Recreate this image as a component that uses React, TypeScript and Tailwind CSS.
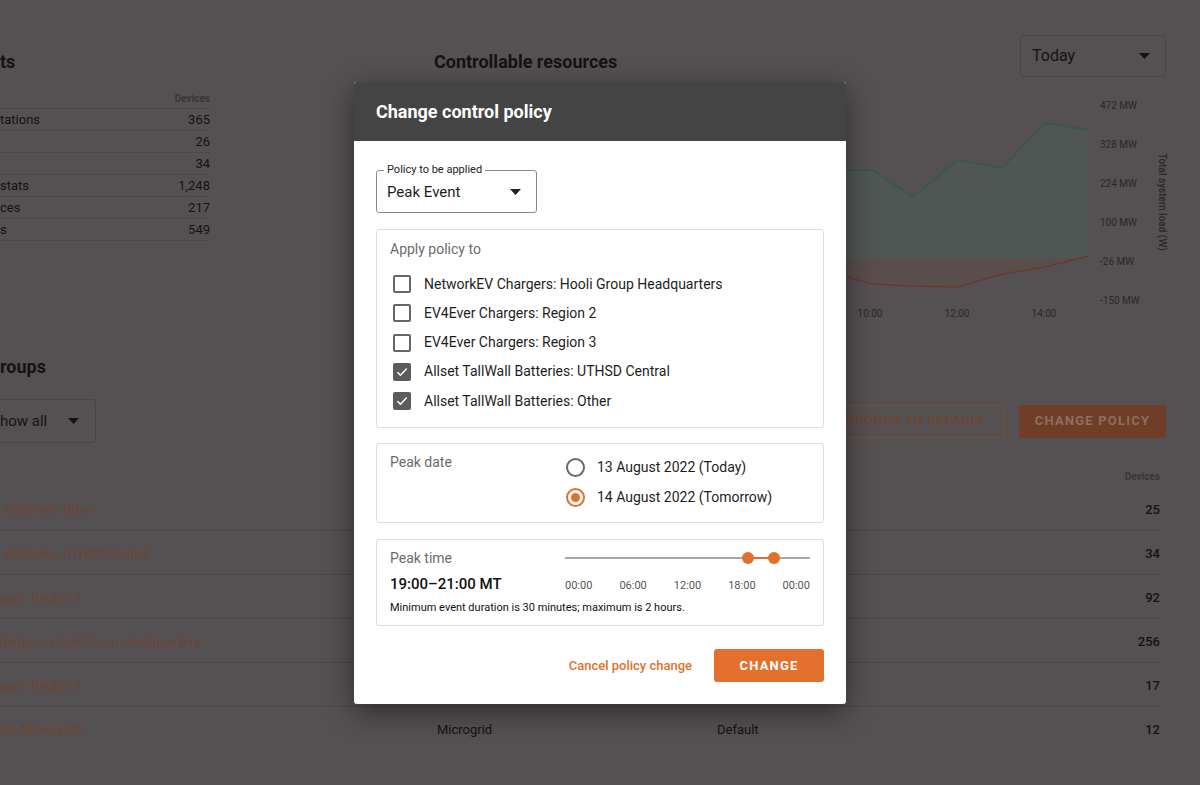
import React from "react";

const FONT = { fontFamily: "Roboto, 'Liberation Sans', Arial, sans-serif" };

function Caret({ color = "currentColor" }: { color?: string }) {
  return (
    <svg width="11" height="6" viewBox="0 0 11 6">
      <path d="M0 0h11L5.5 6z" fill={color} />
    </svg>
  );
}

function Checkbox({ checked }: { checked: boolean }) {
  if (checked)
    return (
      <span className="flex h-[18px] w-[18px] shrink-0 items-center justify-center rounded-[2px] bg-[#5c5c5c]">
        <svg width="12" height="10" viewBox="0 0 12 10">
          <path d="M1.4 5.2l3.1 3 6.2-6.6" fill="none" stroke="white" strokeWidth="1.5" />
        </svg>
      </span>
    );
  return <span className="block h-[18px] w-[18px] shrink-0 rounded-[2px] border-2 border-[#666666]" />;
}

function Radio({ checked }: { checked: boolean }) {
  if (checked)
    return (
      <span className="flex h-[19px] w-[19px] shrink-0 items-center justify-center rounded-full border-2 border-[#e2702d]">
        <span className="block h-[9px] w-[9px] rounded-full bg-[#e2702d]" />
      </span>
    );
  return <span className="block h-[19px] w-[19px] shrink-0 rounded-full border-2 border-[#6a6a6a]" />;
}

const topRows = [
  { name: "tations", n: "365" },
  { name: "", n: "26" },
  { name: "", n: "34" },
  { name: "stats", n: "1,248" },
  { name: "ces", n: "217" },
  { name: "s", n: "549" },
];

const lowerRows = [
  { name: "Batteries: Other", pl: "pl-[5px]", type: "Battery", policy: "Peak Event", n: "25" },
  { name: "Batteries: UTHSD Central", pl: "pl-[5px]", type: "Battery", policy: "Peak Event", n: "34" },
  { name: "gers: Region 2", pl: "pl-0", type: "EV charger", policy: "Default", n: "92" },
  { name: "hargers: Hooli Group Headquarters", pl: "pl-0", type: "EV charger", policy: "Default", n: "256" },
  { name: "gers: Region 3", pl: "pl-0", type: "EV charger", policy: "Default", n: "17" },
  { name: "sta Microgrids", pl: "pl-0", type: "Microgrid", policy: "Default", n: "12" },
];

const checks = [
  { label: "NetworkEV Chargers: Hooli Group Headquarters", checked: false },
  { label: "EV4Ever Chargers: Region 2", checked: false },
  { label: "EV4Ever Chargers: Region 3", checked: false },
  { label: "Allset TallWall Batteries: UTHSD Central", checked: true },
  { label: "Allset TallWall Batteries: Other", checked: true },
];

function Chart() {
  const green: [number, number][] = [
    [300, 120], [420, 110], [520, 95], [600, 92], [637, 85], [662, 85], [703, 112], [748, 75], [792, 83], [835, 38], [878, 45],
  ];
  const red: [number, number][] = [
    [300, 185], [420, 188], [520, 190], [600, 189], [637, 192], [662, 199], [703, 201], [748, 202], [792, 189], [835, 182], [878, 171],
  ];
  const zero = 173;
  const line = (pts: [number, number][]) => pts.map((p) => p.join(",")).join(" ");
  const area = (pts: [number, number][]) =>
    `${pts[0][0]},${zero} ${line(pts)} ${pts[pts.length - 1][0]},${zero}`;
  const yl = [
    ["472 MW", 20],
    ["328 MW", 59],
    ["224 MW", 98],
    ["100 MW", 137],
    ["-26 MW", 176],
    ["-150 MW", 215],
  ] as const;
  const xl = [
    ["10:00", 660],
    ["12:00", 747],
    ["14:00", 834],
  ] as const;
  return (
    <svg width="990" height="240" viewBox="0 0 990 240" className="mt-[8px] block" style={FONT}>
      <polygon points={area(green)} fill="#505653" />
      <polygon points={area(red)} fill="#5a4e4d" />
      <polyline points={line(green)} fill="none" stroke="#315a4c" strokeWidth="1.4" />
      <polyline points={line(red)} fill="none" stroke="#6a3a30" strokeWidth="1.4" />
      {yl.map(([t, y]) => (
        <text key={t} x="890" y={y + 3.5} fontSize="10" fill="#2b2728">
          {t}
        </text>
      ))}
      {xl.map(([t, x]) => (
        <text key={t} x={x} y="232" fontSize="10" fill="#2b2728" textAnchor="middle">
          {t}
        </text>
      ))}
      <text
        x="0"
        y="0"
        fontSize="10"
        fontWeight="500"
        fill="#2b2728"
        textAnchor="middle"
        transform="translate(949 117) rotate(90)"
      >
        Total system load (W)
      </text>
    </svg>
  );
}

export default function App() {
  return (
    <div className="relative h-[785px] w-[1200px] overflow-hidden bg-[#555052] text-[#151213]" style={FONT}>
      {/* Top section */}
      <div className="flex h-[330px]">
        <div className="w-[210px] shrink-0 pt-[50px]">
          <div className="h-[24px] text-[18px] font-bold leading-[24px]">ts</div>
          <div className="mt-[14px] flex h-[21px] items-center justify-end border-b border-[#4a4647] text-[10px] font-bold text-[#3a3637]">
            Devices
          </div>
          {topRows.map((r, i) => (
            <div
              key={i}
              className="flex h-[22px] items-center justify-between border-b border-[#4c4849] pt-[1px] text-[13px]"
            >
              <span>{r.name}</span>
              <span>{r.n}</span>
            </div>
          ))}
        </div>
        <div className="flex flex-1 flex-col">
          <div className="flex items-start justify-between pl-[224px] pr-[34px] pt-[35px]">
            <div className="mt-[15px] text-[18px] font-bold leading-[24px]">Controllable resources</div>
            <div className="flex h-[42px] w-[146px] items-center justify-between rounded-[4px] border border-[#4a4546] pl-[11px] pr-[15px] text-[16px]">
              <span>Today</span>
              <Caret color="#151213" />
            </div>
          </div>
          <Chart />
        </div>
      </div>

      {/* Lower section */}
      <div className="w-[1166px]">
        <div className="mt-[25px] h-[24px] text-[18px] font-bold leading-[24px]">roups</div>
        <div className="mt-[20px] flex h-[44px] items-center justify-between">
          <div className="flex h-[44px] w-[96px] items-center justify-between rounded-r-[4px] border border-l-0 border-[#4a4546] pr-[16px] text-[15px]">
            <span>how all</span>
            <Caret color="#151213" />
          </div>
          <div className="flex items-center gap-[14px]">
            <div className="flex h-[33px] items-center rounded-[3px] border border-[#76503b] px-[18px] text-[13px] font-bold tracking-[0.8px] text-[#6e4632]">
              RESET ALL GROUPS TO DEFAULT
            </div>
            <div className="flex h-[33px] w-[147px] items-center justify-center rounded-[3px] bg-[#703e26] text-[13px] font-bold tracking-[1.2px] text-[#8b6f60]">
              CHANGE POLICY
            </div>
          </div>
        </div>
        <div className="w-[1160px]">
          <div className="mt-[23px] flex h-[21px] items-center justify-end text-[10px] font-bold text-[#3a3637]">
            Devices
          </div>
          {lowerRows.map((r, i) => (
            <div
              key={i}
              className={`grid h-[44px] grid-cols-[437px_280px_1fr_80px] items-center pt-[2px] text-[13px] ${
                i < lowerRows.length - 1 ? "border-b border-[#4b4748]" : ""
              }`}
            >
              <span className={`${r.pl} text-[#6c4632]`}>{r.name}</span>
              <span>{r.type}</span>
              <span>{r.policy}</span>
              <span className="text-right font-medium">{r.n}</span>
            </div>
          ))}
        </div>
      </div>

      {/* Modal */}
      <div className="absolute left-[354px] top-[82px] w-[492px] overflow-hidden rounded-[3px] bg-white shadow-[0_8px_30px_rgba(0,0,0,0.45)]">
        <div className="flex h-[59px] items-center bg-[#444444] px-[22px]">
          <span className="text-[18px] font-bold text-white">Change control policy</span>
        </div>
        <div className="px-[22px] pb-[22px] pt-[29px]">
          {/* select */}
          <div className="relative flex h-[43px] w-[161px] items-center justify-between rounded-[3px] border border-[#8a8a8a] pl-[10px] pr-[15px] text-[15px] text-[#1e1e1e]">
            <span className="absolute -top-[8px] left-[7px] bg-white px-[3px] text-[11px] leading-[14px] text-[#222]">
              Policy to be applied
            </span>
            <span className="mt-[1px]">Peak Event</span>
            <Caret color="#222" />
          </div>

          {/* apply policy */}
          <div className="mt-[16px] rounded-[3px] border border-[#dddddd] pb-[12px] pl-[13px] pt-[9px]">
            <div className="h-[20px] text-[14px] leading-[20px] text-[#6b6b6b]">Apply policy to</div>
            <div className="mt-[10px] flex flex-col">
              {checks.map((c) => (
                <div key={c.label} className="flex h-[29.25px] items-center pt-[1px]">
                  <span className="ml-[3px]">
                    <Checkbox checked={c.checked} />
                  </span>
                  <span className="ml-[13px] text-[14px] text-[#1e1e1e]">{c.label}</span>
                </div>
              ))}
            </div>
          </div>

          {/* peak date */}
          <div className="mt-[15px] flex rounded-[3px] border border-[#dddddd] pb-[10px] pl-[13px] pt-[8px]">
            <div className="h-[20px] w-[176px] text-[14px] leading-[20px] text-[#6b6b6b]">Peak date</div>
            <div className="flex flex-col">
              <div className="flex h-[30px] items-center">
                <Radio checked={false} />
                <span className="ml-[12px] text-[14px] text-[#1e1e1e]">13 August 2022 (Today)</span>
              </div>
              <div className="flex h-[30px] items-center">
                <Radio checked={true} />
                <span className="ml-[12px] text-[14px] text-[#1e1e1e]">14 August 2022 (Tomorrow)</span>
              </div>
            </div>
          </div>

          {/* peak time */}
          <div className="mt-[16px] rounded-[3px] border border-[#dddddd] pb-[10px] pl-[13px] pr-[13px] pt-[8px]">
            <div className="flex">
              <div className="w-[175px]">
                <div className="h-[20px] text-[14px] leading-[20px] text-[#6b6b6b]">Peak time</div>
                <div className="mt-[6px] h-[20px] text-[15px] font-medium leading-[20px] text-[#111]">
                  19:00–21:00 MT
                </div>
              </div>
              <div className="w-[245px]">
                <div className="relative mt-[4px] h-[12px]">
                  <div className="absolute left-0 right-0 top-[5px] h-[2px] bg-[#a8a8a8]" />
                  <div className="absolute left-[183px] top-[5px] h-[2px] w-[26px] bg-[#e2702d]" />
                  <div className="absolute left-[177px] top-0 h-[12px] w-[12px] rounded-full bg-[#e2702d]" />
                  <div className="absolute left-[203px] top-0 h-[12px] w-[12px] rounded-full bg-[#e2702d]" />
                </div>
                <div className="mt-[15px] flex justify-between text-[11px] leading-[14px] text-[#555]">
                  <span>00:00</span>
                  <span>06:00</span>
                  <span>12:00</span>
                  <span>18:00</span>
                  <span>00:00</span>
                </div>
              </div>
            </div>
            <div className="mt-[7px] text-[11px] leading-[14px] text-[#111]">
              Minimum event duration is 30 minutes; maximum is 2 hours.
            </div>
          </div>

          {/* footer */}
          <div className="mt-[23px] flex items-center justify-end gap-[22px]">
            <span className="text-[13px] font-medium text-[#e2702d]">Cancel policy change</span>
            <div className="flex h-[33px] w-[110px] items-center justify-center rounded-[3px] bg-[#e3702c] text-[13px] font-bold tracking-[1.2px] text-white">
              CHANGE
            </div>
          </div>
        </div>
      </div>
    </div>
  );
}
